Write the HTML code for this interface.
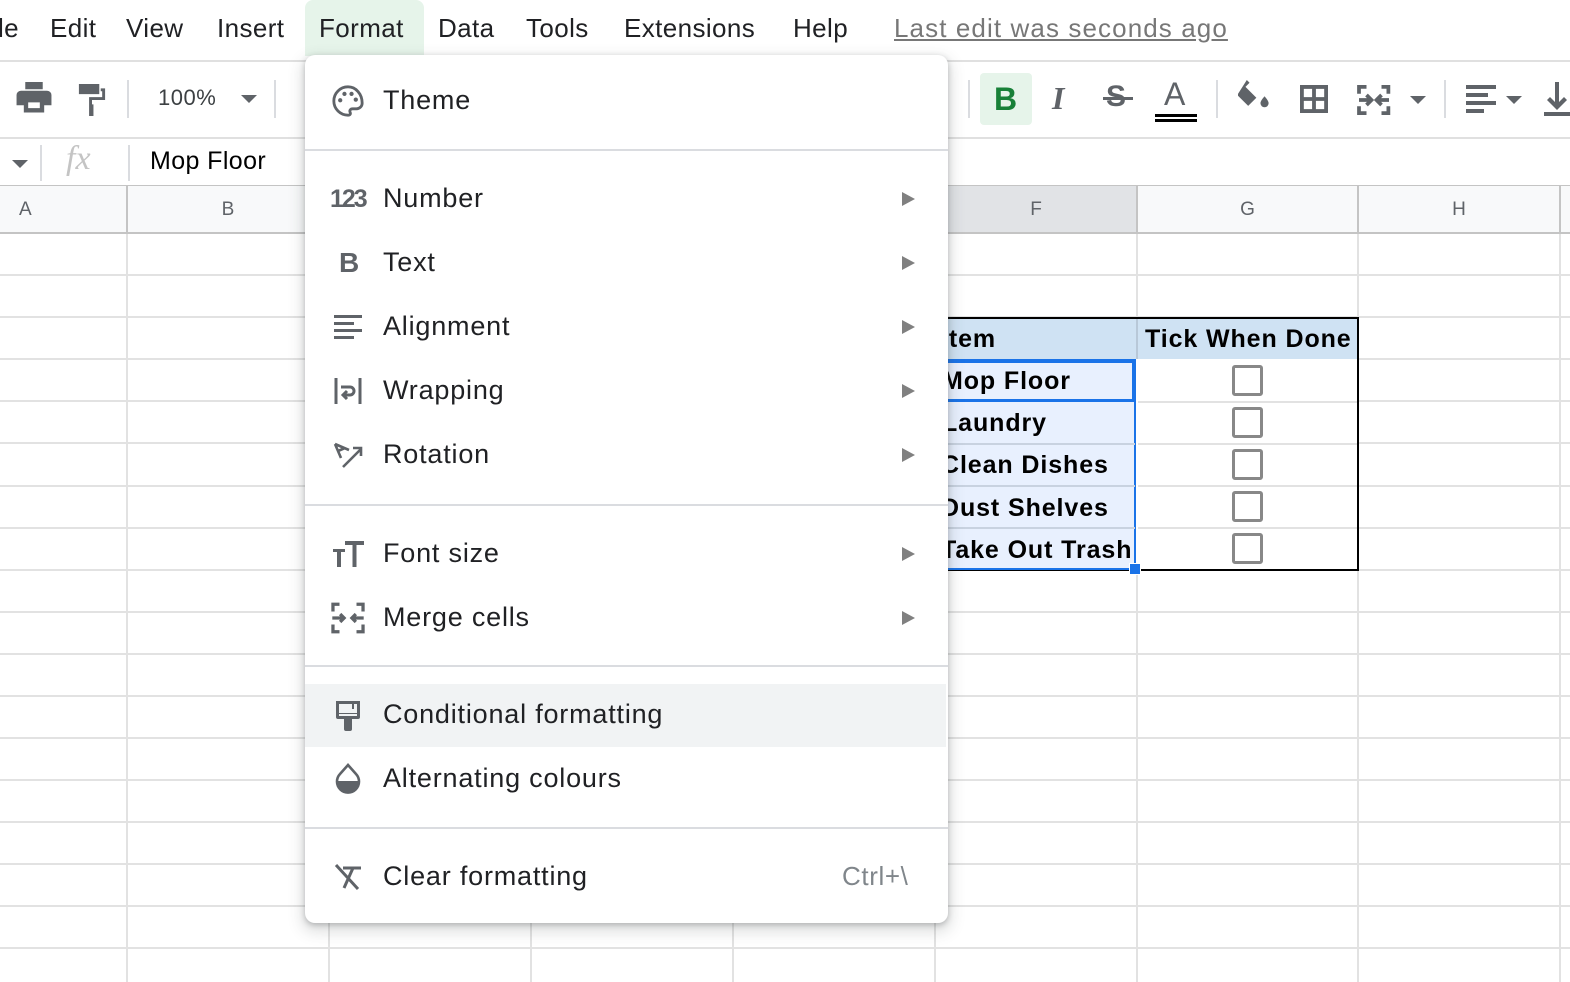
<!DOCTYPE html>
<html><head><meta charset="utf-8"><style>
*{margin:0;padding:0;box-sizing:border-box}
body{width:1570px;height:982px;overflow:hidden;background:#fff;font-family:"Liberation Sans",Arial,sans-serif;position:relative;color:#202124}
.a{position:absolute}
.mb{font-size:26px;top:13px;color:#202124;letter-spacing:0.4px}
.hl{position:absolute;left:0;right:0;height:2px;background:#e2e2e2}
.vl{position:absolute;top:186px;bottom:0;width:2px;background:#e2e2e2}
.ch{position:absolute;top:186px;height:48px;font-size:19px;color:#5f6368;text-align:center;line-height:48px;background:#f8f9fa;border-right:2px solid #c4c4c4;border-bottom:2px solid #c4c4c4}
.cell{position:absolute;font-weight:bold;font-size:25px;color:#000;white-space:nowrap;letter-spacing:0.9px}
.cb{position:absolute;left:1232px;width:31px;height:31px;border:3px solid #888;border-radius:3px;background:#fff}
.menu{position:absolute;left:305px;top:55px;width:643px;height:868px;background:#fff;border-radius:10px;box-shadow:0 2px 6px rgba(60,64,67,.3),0 6px 14px 4px rgba(60,64,67,.15)}
.it{position:absolute;left:78px;font-size:27px;color:#202124;white-space:nowrap;letter-spacing:0.8px}
.ar{position:absolute;left:597px;width:0;height:0;border-top:7px solid transparent;border-bottom:7px solid transparent;border-left:13px solid #808080}
.sep{position:absolute;left:0;right:0;height:2px;background:#dadce0}
.ic{position:absolute;left:26px;width:34px;height:34px}
</style></head><body>
<!-- menubar -->
<div class="a" style="left:305px;top:0;width:119px;height:56px;background:#e6f4ea;border-radius:8px 8px 0 0"></div>
<div class="a mb" style="left:-2px">le</div>
<div class="a mb" style="left:50px">Edit</div>
<div class="a mb" style="left:126px">View</div>
<div class="a mb" style="left:217px">Insert</div>
<div class="a mb" style="left:319px">Format</div>
<div class="a mb" style="left:438px">Data</div>
<div class="a mb" style="left:526px">Tools</div>
<div class="a mb" style="left:624px">Extensions</div>
<div class="a mb" style="left:793px">Help</div>
<div class="a mb" style="left:894px;color:#777;text-decoration:underline;letter-spacing:1.1px">Last edit was seconds ago</div>
<div class="a" style="left:0;right:0;top:60px;height:2px;background:#e0e0e0"></div>
<!-- toolbar -->
<svg class="a" style="left:16px;top:82px" width="36" height="32" viewBox="0 0 24 22"><path fill="#5f6368" d="M6 0h12v5H6zM3 6h18a3 3 0 0 1 3 3v7h-5v5H5v-5H0V9a3 3 0 0 1 3-3zm5 8v4h8v-4z"/></svg>
<svg class="a" style="left:77px;top:84px" width="30" height="32" viewBox="0 0 20 22"><path fill="#5f6368" d="M1 0h14v7H1zM16 3h3v8H10v3H8v-5h9V5h-1zM8 14h3v8H8z"/></svg>
<div class="a" style="left:127px;top:80px;width:2px;height:38px;background:#dadce0"></div>
<div class="a" style="left:158px;top:85px;font-size:22px;color:#3c4043;letter-spacing:0.5px">100%</div>
<div class="a" style="left:241px;top:95px;border-left:8px solid transparent;border-right:8px solid transparent;border-top:8px solid #5f6368"></div>
<div class="a" style="left:274px;top:80px;width:2px;height:38px;background:#dadce0"></div>
<div class="a" style="left:968px;top:80px;width:2px;height:38px;background:#dadce0"></div>
<div class="a" style="left:980px;top:73px;width:52px;height:52px;background:#e6f4ea;border-radius:4px"></div>
<div class="a" style="left:994px;top:81px;font-size:32px;font-weight:bold;color:#188038">B</div>
<div class="a" style="left:1052px;top:80px;font-size:32px;font-style:italic;font-family:'Liberation Serif',serif;font-weight:bold;color:#5f6368">I</div>
<div class="a" style="left:1106px;top:80px;font-size:30px;font-weight:bold;color:#5f6368">S</div>
<div class="a" style="left:1103px;top:97px;width:30px;height:3px;background:#5f6368"></div>
<div class="a" style="left:1164px;top:76px;font-size:32px;color:#5f6368">A</div>
<div class="a" style="left:1155px;top:114px;width:42px;height:3px;background:#000"></div>
<div class="a" style="left:1155px;top:119px;width:42px;height:3px;background:#000"></div>
<div class="a" style="left:1216px;top:80px;width:2px;height:38px;background:#dadce0"></div>
<svg class="a" style="left:1238px;top:80px" width="34" height="30" viewBox="0 0 24 22"><path fill="#5f6368" d="M6 0l2 2-3 3 8 8-6 6-8-8zM19 12s3 3 3 5a3 3 0 0 1-6 0c0-2 3-5 3-5z"/></svg>
<svg class="a" style="left:1299px;top:85px" width="30" height="28" viewBox="0 0 22 22"><path fill="none" stroke="#5f6368" stroke-width="3" d="M1.5 1.5h19v19h-19zM11 1v20M1 11h20"/></svg>
<svg class="a" style="left:1357px;top:85px" width="34" height="30" viewBox="0 0 26 24"><path fill="none" stroke="#5f6368" stroke-width="3" d="M1 7V1.5h6M19 1.5h5.5V7M1 17v5.5h6M19 22.5h5.5V17M1 12h9M7 8l4 4-4 4M25 12h-9M19 8l-4 4 4 4"/></svg>
<div class="a" style="left:1410px;top:96px;border-left:8px solid transparent;border-right:8px solid transparent;border-top:8px solid #5f6368"></div>
<div class="a" style="left:1444px;top:80px;width:2px;height:38px;background:#dadce0"></div>
<svg class="a" style="left:1466px;top:85px" width="30" height="28" viewBox="0 0 30 28"><path fill="#5f6368" d="M0 0h30v4H0zM0 8h22v4H0zM0 16h30v4H0zM0 24h18v4H0z"/></svg>
<div class="a" style="left:1506px;top:96px;border-left:8px solid transparent;border-right:8px solid transparent;border-top:8px solid #5f6368"></div>
<svg class="a" style="left:1544px;top:82px" width="26" height="34" viewBox="0 0 26 34"><path fill="#5f6368" d="M11 0h4v20l5-5 3 3-10 10L3 18l3-3 5 5zM0 30h26v4H0z"/></svg>
<div class="a" style="left:0;right:0;top:137px;height:2px;background:#e0e0e0"></div>
<!-- formula bar -->
<div class="a" style="left:12px;top:160px;border-left:8px solid transparent;border-right:8px solid transparent;border-top:8px solid #5f6368"></div>
<div class="a" style="left:40px;top:145px;width:2px;height:36px;background:#dadce0"></div>
<div class="a" style="left:66px;top:140px;font-size:34px;font-style:italic;font-family:'Liberation Serif',serif;color:#c4c4c4">fx</div>
<div class="a" style="left:128px;top:145px;width:2px;height:36px;background:#dadce0"></div>
<div class="a" style="left:150px;top:147px;font-size:25px;color:#000;letter-spacing:0.4px">Mop Floor</div>
<div class="a" style="left:0;right:0;top:185px;height:2px;background:#c4c4c4"></div>
<!-- grid -->
<div class="hl" style="top:274px"></div><div class="hl" style="top:316px"></div><div class="hl" style="top:358px"></div><div class="hl" style="top:400px"></div><div class="hl" style="top:442px"></div><div class="hl" style="top:485px"></div><div class="hl" style="top:527px"></div><div class="hl" style="top:569px"></div><div class="hl" style="top:611px"></div><div class="hl" style="top:653px"></div><div class="hl" style="top:695px"></div><div class="hl" style="top:737px"></div><div class="hl" style="top:779px"></div><div class="hl" style="top:821px"></div><div class="hl" style="top:863px"></div><div class="hl" style="top:905px"></div><div class="hl" style="top:947px"></div>
<div class="vl" style="left:126px"></div><div class="vl" style="left:328px"></div><div class="vl" style="left:530px"></div><div class="vl" style="left:732px"></div><div class="vl" style="left:934px"></div><div class="vl" style="left:1136px"></div><div class="vl" style="left:1357px"></div><div class="vl" style="left:1559px"></div>
<div class="ch" style="left:0;width:128px;text-align:left;padding-left:19px">A</div>
<div class="ch" style="left:128px;width:202px">B</div>
<div class="ch" style="left:330px;width:606px"></div>
<div class="ch" style="left:936px;width:202px;background:#e1e3e6">F</div>
<div class="ch" style="left:1138px;width:221px">G</div>
<div class="ch" style="left:1359px;width:202px">H</div>
<div class="ch" style="left:1561px;width:20px"></div>
<!-- table -->
<div class="a" style="left:700px;top:317px;width:659px;height:254px;border:2px solid #000;background:#fff"></div>
<div class="a" style="left:702px;top:319px;width:655px;height:40px;background:#cfe2f3"></div>
<div class="a" style="left:1136px;top:319px;width:2px;height:40px;background:#b8c8d8"></div>
<div class="a" style="left:702px;top:359px;width:434px;height:211px;background:#e8f0fe"></div>
<div class="a" style="left:702px;top:359px;width:434px;height:211px;border:2px solid #1a73e8;border-left:none"></div>
<div class="a" style="left:702px;top:360px;width:433px;height:42px;border:3px solid #1a73e8;border-left:none"></div>
<div class="a" style="left:702px;top:443px;width:433px;height:2px;background:#c8d2e0"></div>
<div class="a" style="left:702px;top:485px;width:433px;height:2px;background:#c8d2e0"></div>
<div class="a" style="left:702px;top:527px;width:433px;height:2px;background:#c8d2e0"></div>
<div class="a" style="left:1138px;top:401px;width:219px;height:2px;background:#e2e2e2"></div>
<div class="a" style="left:1138px;top:443px;width:219px;height:2px;background:#e2e2e2"></div>
<div class="a" style="left:1138px;top:485px;width:219px;height:2px;background:#e2e2e2"></div>
<div class="a" style="left:1138px;top:527px;width:219px;height:2px;background:#e2e2e2"></div>
<div class="a" style="left:1129px;top:563px;width:12px;height:12px;background:#1a73e8;border:1px solid #fff"></div>
<div class="cell" style="left:941px;top:325px">Item</div>
<div class="cell" style="left:1145px;top:325px">Tick When Done</div>
<div class="cell" style="left:942px;top:367px">Mop Floor</div>
<div class="cell" style="left:942px;top:409px">Laundry</div>
<div class="cell" style="left:941px;top:451px">Clean Dishes</div>
<div class="cell" style="left:941px;top:494px">Dust Shelves</div>
<div class="cell" style="left:941px;top:536px">Take Out Trash</div>
<div class="cb" style="top:365px"></div><div class="cb" style="top:407px"></div><div class="cb" style="top:449px"></div><div class="cb" style="top:491px"></div><div class="cb" style="top:533px"></div>
<!-- menu -->
<div class="menu">
<svg class="ic" style="top:29px" viewBox="0 0 24 24"><path fill="none" stroke="#5f6368" stroke-width="2" d="M12 2a10 10 0 0 0 0 20c1.5 0 2-1 1.5-2-.6-1.3.3-2.5 1.7-2.5H18a4 4 0 0 0 4-4C22 7 17.5 2 12 2z"/><circle cx="6.5" cy="11.5" r="1.5" fill="#5f6368"/><circle cx="9.5" cy="7" r="1.5" fill="#5f6368"/><circle cx="14.5" cy="7" r="1.5" fill="#5f6368"/><circle cx="17.5" cy="11" r="1.5" fill="#5f6368"/></svg>
<div class="it" style="top:30px">Theme</div>
<div class="sep" style="top:94px"></div>
<div class="a" style="left:25px;top:130px;font-size:25px;font-weight:bold;color:#5f6368;letter-spacing:-2px">123</div>
<div class="it" style="top:128px">Number</div><div class="ar" style="top:137px"></div>
<div class="a" style="left:34px;top:192px;font-size:28px;font-weight:bold;color:#5f6368">B</div>
<div class="it" style="top:192px">Text</div><div class="ar" style="top:201px"></div>
<svg class="ic" style="top:255px" viewBox="0 0 34 34"><path fill="#5f6368" d="M3 5h28v3H3zM3 12h20v3H3zM3 19h28v3H3zM3 26h20v3H3z"/></svg>
<div class="it" style="top:256px">Alignment</div><div class="ar" style="top:265px"></div>
<svg class="ic" style="top:319px" viewBox="0 0 34 34"><path fill="none" stroke="#5f6368" stroke-width="3" d="M5 4v26M29 4v26M10 13h9a4 4 0 0 1 0 8h-6M16 17l-4 4 4 4"/></svg>
<div class="it" style="top:320px">Wrapping</div><div class="ar" style="top:329px"></div>
<svg class="ic" style="top:383px" viewBox="0 0 34 34"><path fill="none" stroke="#5f6368" stroke-width="2.6" d="M4 6l14 6M4 6l6 14M7 13l7-3M12 29l18-18M22 10h8v8"/></svg>
<div class="it" style="top:384px">Rotation</div><div class="ar" style="top:393px"></div>
<div class="sep" style="top:449px"></div>
<svg class="ic" style="top:482px" viewBox="0 0 34 34"><path fill="#5f6368" d="M2 12h12v3H10v15H6V15H2zM14 4h19v4h-7.5v22h-4V8H14z"/></svg>
<div class="it" style="top:483px">Font size</div><div class="ar" style="top:492px"></div>
<svg class="ic" style="top:546px" viewBox="0 0 26 24"><path fill="none" stroke="#5f6368" stroke-width="2.5" d="M1.5 7V1.5h5M19.5 1.5h5V7M1.5 17v5.5h5M19.5 22.5h5V17M1 12h9M7 9l3 3-3 3M25 12h-9M19 9l-3 3 3 3"/></svg>
<div class="it" style="top:547px">Merge cells</div><div class="ar" style="top:556px"></div>
<div class="sep" style="top:610px"></div>
<div class="a" style="left:0;top:629px;width:641px;height:63px;background:#f1f3f4"></div>
<svg class="ic" style="top:644px" viewBox="0 0 34 34"><path fill="#5f6368" d="M5 2h24v16a2 2 0 0 1-2 2h-6v10a2 2 0 0 1-2 2h-4a2 2 0 0 1-2-2V20H7a2 2 0 0 1-2-2zM8 5v9h18V5h-3v5h-2V5zM8 15v2h18v-2z"/></svg>
<div class="it" style="top:644px">Conditional formatting</div>
<svg class="ic" style="top:707px" viewBox="0 0 34 34"><path fill="none" stroke="#5f6368" stroke-width="2.6" d="M17 3l-8 9a11 11 0 1 0 16 0z"/><path fill="#5f6368" d="M5.5 19h23a11.5 11.5 0 0 1-23 0z"/></svg>
<div class="it" style="top:708px">Alternating colours</div>
<div class="sep" style="top:772px"></div>
<svg class="ic" style="top:805px" viewBox="0 0 34 34"><path fill="none" stroke="#5f6368" stroke-width="3" d="M5 5l22 24M12 8h18M22 8l-9 20"/></svg>
<div class="it" style="top:806px">Clear formatting</div>
<div class="a" style="left:537px;top:806px;font-size:26px;color:#80868b;letter-spacing:0.6px">Ctrl+\</div>
</div>
</body></html>
